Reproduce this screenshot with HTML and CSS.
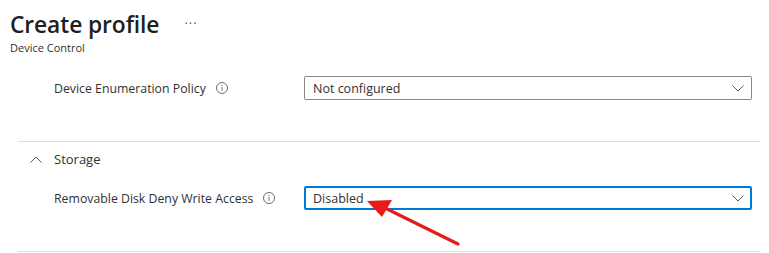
FILE: index.html
```html
<!DOCTYPE html>
<html>
<head>
<meta charset="utf-8">
<link rel="stylesheet" href="styles.css">
</head>
<body>
<div class="page">
  <header class="header">
    <div class="title-row">
      <h1 class="title">Create profile</h1>
      <span class="more">···</span>
    </div>
    <div class="subtitle">Device Control</div>
  </header>

  <div class="row row-first">
    <div class="label">Device Enumeration Policy
      <svg class="info" viewBox="0 0 12 12" width="12" height="12"><circle cx="6" cy="6" r="5.5" fill="none" stroke="#605e5c" stroke-width="0.9"/><circle cx="6" cy="3.6" r="0.6" fill="#605e5c"/><rect x="5.55" y="5" width="0.9" height="3.8" fill="#605e5c"/></svg>
    </div>
    <div class="select">
      <span>Not configured</span>
      <svg class="chev" viewBox="0 0 12 7" width="12" height="7"><path d="M0.5 0.5 L6 6 L11.5 0.5" fill="none" stroke="#605e5c" stroke-width="1"/></svg>
    </div>
  </div>

  <div class="section">
    <div class="section-head">
      <svg class="chev-up" viewBox="0 0 12 7" width="12" height="7"><path d="M0.5 6.5 L6 1 L11.5 6.5" fill="none" stroke="#605e5c" stroke-width="1"/></svg>
      <span>Storage</span>
    </div>
    <div class="row row-second">
      <div class="label">Removable Disk Deny Write Access
        <svg class="info" viewBox="0 0 12 12" width="12" height="12"><circle cx="6" cy="6" r="5.5" fill="none" stroke="#605e5c" stroke-width="0.9"/><circle cx="6" cy="3.6" r="0.6" fill="#605e5c"/><rect x="5.55" y="5" width="0.9" height="3.8" fill="#605e5c"/></svg>
      </div>
      <div class="select focused">
        <span>Disabled</span>
        <svg class="chev" viewBox="0 0 12 7" width="12" height="7"><path d="M0.5 0.5 L6 6 L11.5 0.5" fill="none" stroke="#605e5c" stroke-width="1"/></svg>
      </div>
    </div>
  </div>

  <svg class="arrow" viewBox="0 0 769 253" width="769" height="253">
    <line x1="458" y1="244" x2="385" y2="208" stroke="#e81b1b" stroke-width="3.2" stroke-linecap="round"/>
    <polygon points="367,201 392,200 382,217" fill="#e81b1b"/>
  </svg>
</div>
</body>
</html>
```
FILE: styles.css
```css
* { box-sizing: border-box; }
html, body { margin: 0; padding: 0; background: #fff; }
body {
  font-family: "Segoe UI", "Open Sans", "Noto Sans", sans-serif;
  color: #323130;
  width: 769px;
  height: 253px;
  overflow: hidden;
}
.page { position: relative; width: 769px; height: 253px; }
.header { padding: 8px 0 0 10px; height: 62px; }
.title-row { display: flex; align-items: center; height: 33px; }
.title {
  margin: 0;
  font-size: 22.8px;
  font-weight: 600;
  color: #201f1e;
  letter-spacing: -0.1px;
}
.more { margin-left: 25px; font-size: 13px; color: #605e5c; letter-spacing: 1px; margin-top: -4px; }
.subtitle { font-size: 11px; color: #323130; margin-top: 0; line-height: 14px; }

.row { display: flex; align-items: center; height: 24px; }
.row-first { margin-top: 14px; }
.label {
  width: 304px;
  padding-left: 54px;
  font-size: 12.3px;
  display: flex;
  align-items: center;
}
.info { margin-left: 10px; }
.row-second .info { margin-left: 10px; }
.select {
  width: 448px;
  height: 24px;
  border: 1px solid #8a8886;
  border-radius: 2px;
  display: flex;
  align-items: center;
  justify-content: space-between;
  padding: 0 7px 0 8px;
  font-size: 12.5px;
}
.select.focused { border: 2px solid #0078d4; padding-left: 7px; padding-right: 6px; }
.chev { margin-top: 1px; }

.section {
  margin: 41px 9px 0 18px;
  border-top: 1px solid #e1dfdd;
  border-bottom: 1px solid #e1dfdd;
  height: 111px;
}
.section-head {
  display: flex;
  align-items: center;
  height: 34px;
  padding-left: 12px;
  font-size: 13px;
  margin-top: 0;
}
.section-head span { margin-left: 12px; }
.row-second { margin-top: 10px; margin-left: -18px; }
.arrow { position: absolute; left: 0; top: 0; pointer-events: none; }
```
